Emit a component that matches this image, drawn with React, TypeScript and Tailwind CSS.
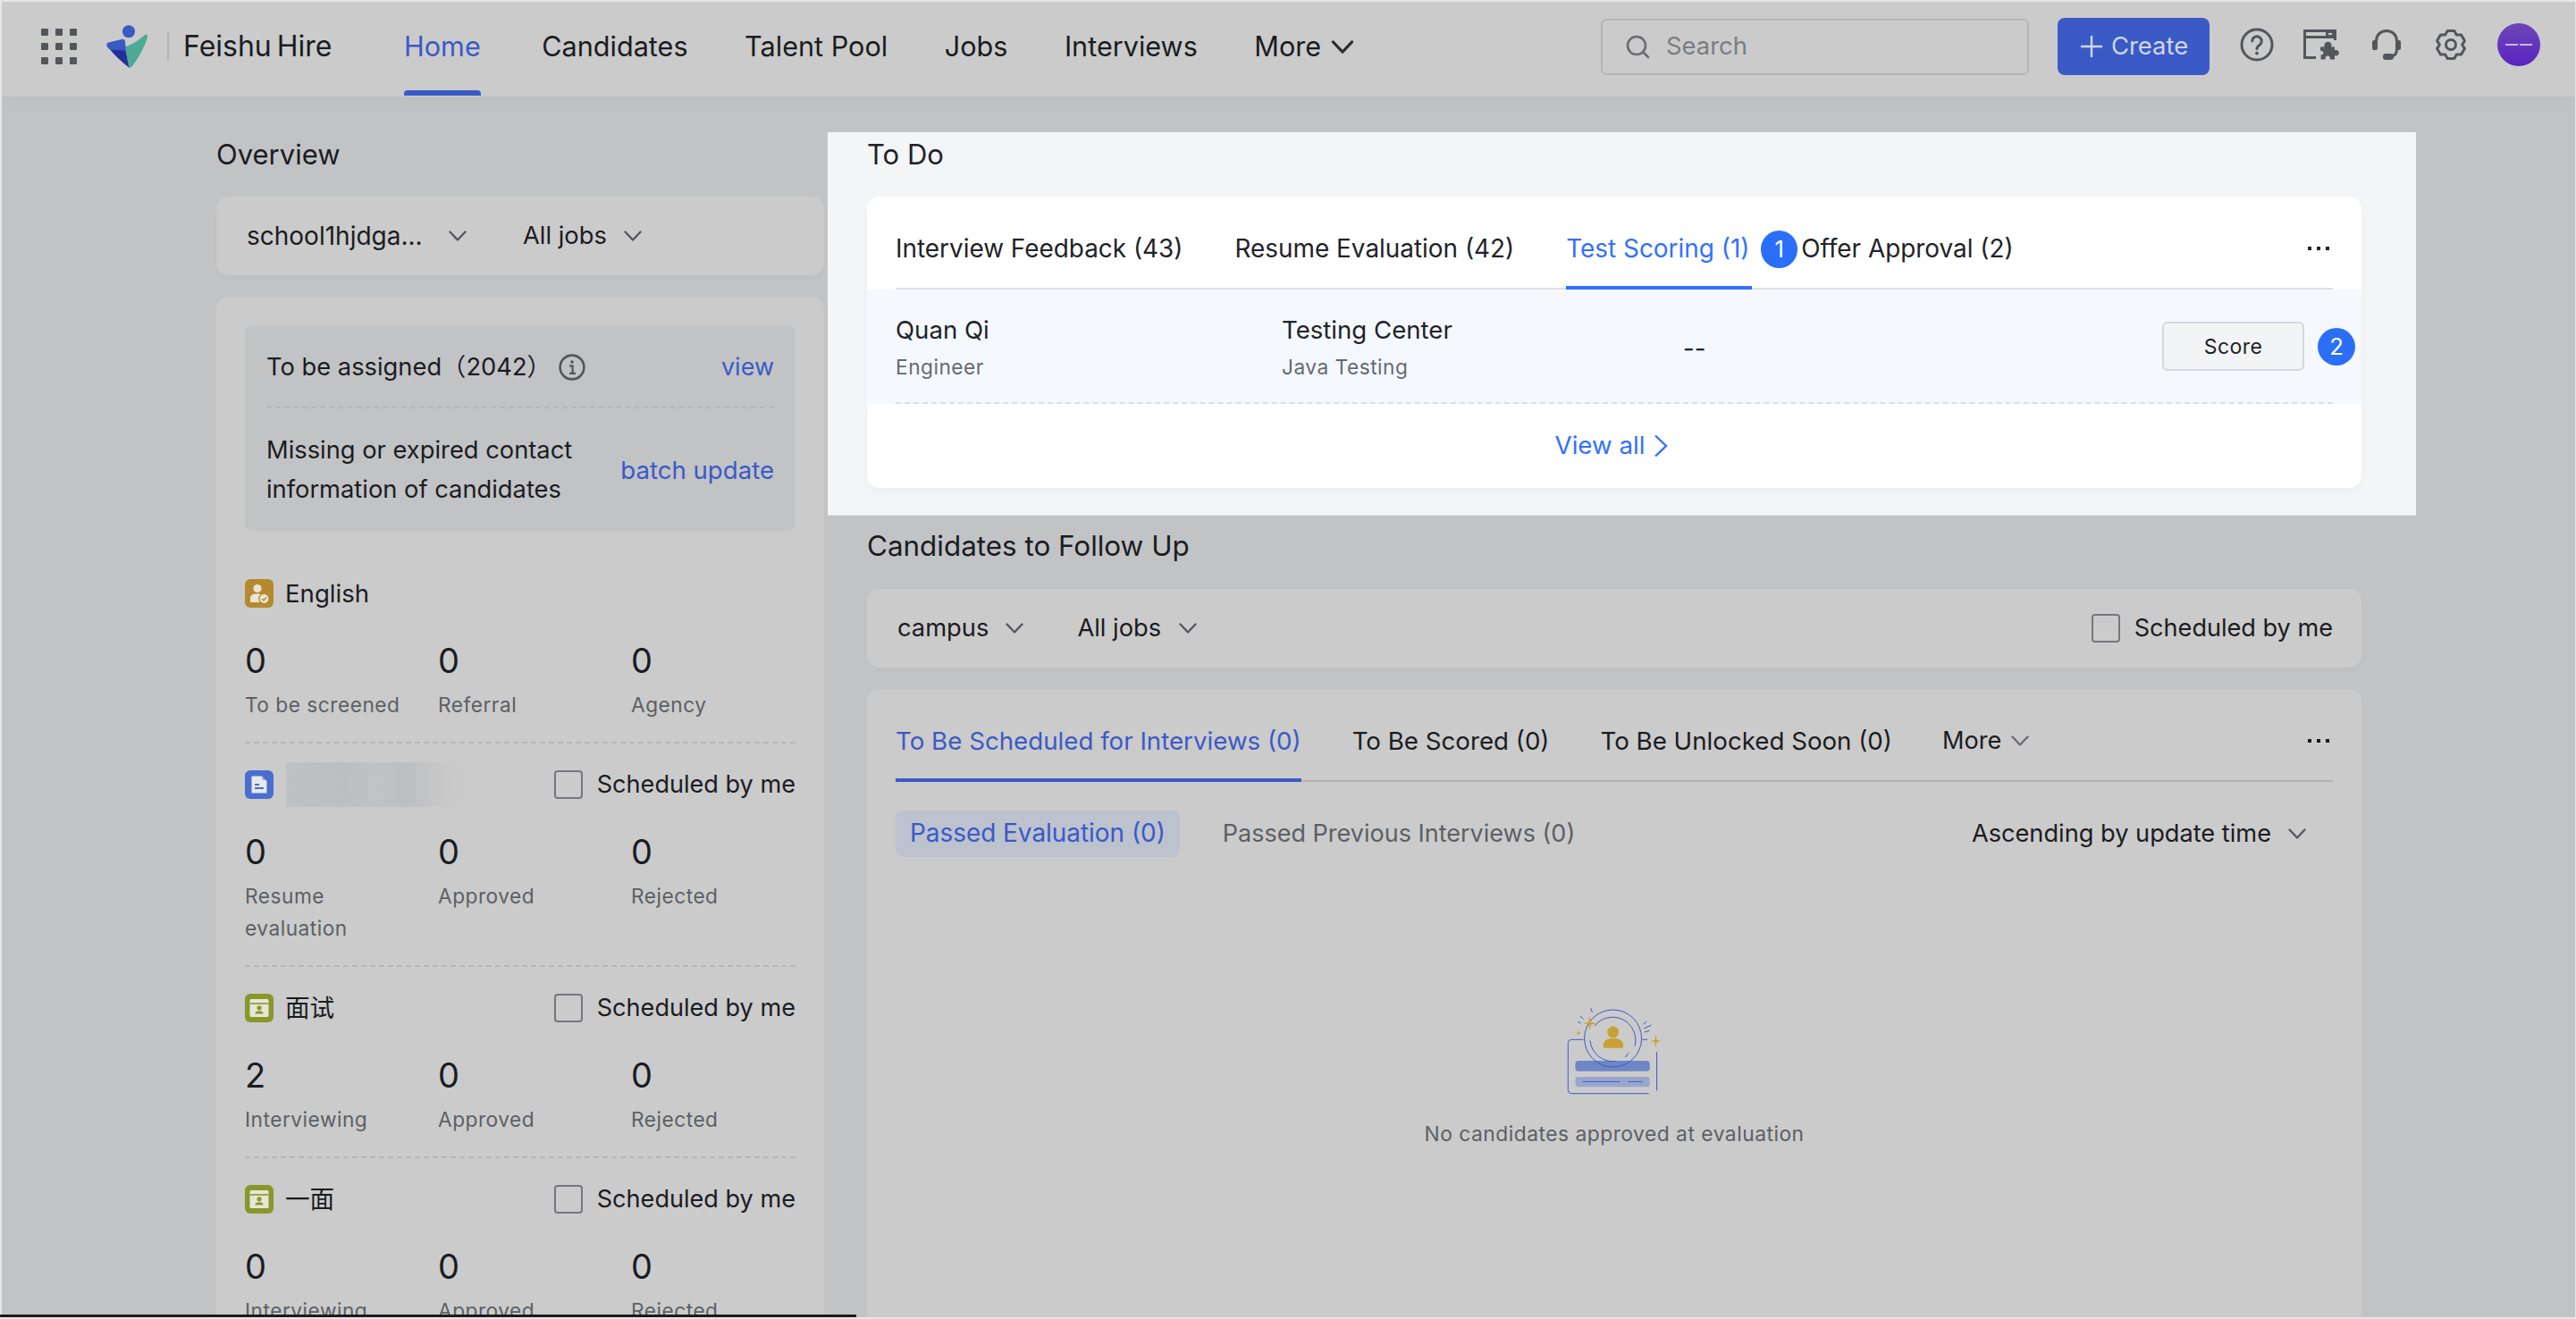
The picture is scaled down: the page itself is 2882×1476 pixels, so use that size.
import React from "react";

const gearPath = (() => {
  const pts: string[] = [];
  const p = (a: number, r: number) => {
    const t = (a * Math.PI) / 180;
    return `${(18 + r * Math.cos(t)).toFixed(2)} ${(18 + r * Math.sin(t)).toFixed(2)}`;
  };
  for (let k = 0; k < 6; k++) {
    const a = -90 + 60 * k;
    pts.push(p(a - 14, 16), p(a + 14, 16), p(a + 30, 12.6));
  }
  return "M" + pts.join("L") + "Z";
})();

function Chevron({ w = 20, color = "#55575d" }: { w?: number; color?: string }) {
  return (
    <svg width={w} height={w / 2 + 2} viewBox="0 0 20 12" fill="none" className="shrink-0">
      <path d="M1.5 1.5L10 10.5L18.5 1.5" stroke={color} strokeWidth="2.4" strokeLinejoin="round" strokeLinecap="round" />
    </svg>
  );
}

function Dots({ color = "#1f2329" }: { color?: string }) {
  return (
    <svg width="24" height="6" viewBox="0 0 24 6" className="shrink-0">
      <rect x="0" y="1" width="4" height="4" fill={color} />
      <rect x="10" y="1" width="4" height="4" fill={color} />
      <rect x="20" y="1" width="4" height="4" fill={color} />
    </svg>
  );
}

function Logo() {
  return (
    <svg width="54" height="54" viewBox="0 0 54 54" className="shrink-0">
      <path d="M25 27.5C31 25.5 42 19 47 14C49 12.5 50.8 14 50 16.5C47.5 27 36 47 31.2 50.8C30 51.8 29 50.5 28.8 49.5L25 27.5Z" fill="#4dab95" />
      <path d="M7.5 29.5L25.5 31L29.3 50.5C23 46 12 36 7.5 29.5Z" fill="#22309a" />
      <path d="M5.5 22.8L21 18.9C23.2 18.4 24.6 19.6 25 21.2L25.8 31.6L7.8 30.4C4.6 28 3 24.3 5.5 22.8Z" fill="#3a5ac6" />
      <circle cx="29" cy="10.3" r="7" fill="#3a5ac6" />
    </svg>
  );
}

function HelpIcon() {
  return (
    <svg width="38" height="38" viewBox="0 0 38 38" fill="none" className="shrink-0">
      <circle cx="19" cy="19" r="17" stroke="#54565c" strokeWidth="3" />
      <path d="M13.8 15a5.2 5.2 0 1 1 8 4.4c-1.9 1.2-2.8 2.2-2.8 4.4" stroke="#54565c" strokeWidth="3" strokeLinecap="round" />
      <circle cx="19" cy="28.6" r="1.9" fill="#54565c" />
    </svg>
  );
}

function PluginIcon() {
  return (
    <svg width="40" height="34" viewBox="0 0 40 34" fill="none" className="shrink-0">
      <path d="M14 31.5H1.5V1.5H35.5V12" stroke="#54565c" strokeWidth="3" />
      <path d="M1.5 8.5H35.5" stroke="#54565c" strokeWidth="3" />
      <rect x="25" y="1" width="11" height="8" fill="#54565c" />
      <rect x="28" y="4" width="4" height="2" fill="#cbcbcb" />
      <path d="M19 19.5H23.6C23 16.6 24.5 13.8 27.6 13.8C30.7 13.8 32 16.6 31.4 19.5H35V23.2C38 22.6 39.8 24 39.8 26.2C39.8 28.4 38 29.8 35 29.2V33.5H29.8C30.1 31 29 29.6 27.2 29.6C25.4 29.6 24.3 31 24.6 33.5H19.6V28.6C21.5 28.4 22.4 27.4 22.4 26C22.4 24.6 21.2 23.6 19 23.7V19.5Z" fill="#54565c" />
    </svg>
  );
}

function HeadsetIcon() {
  return (
    <svg width="32" height="34" viewBox="0 0 32 34" fill="none" className="shrink-0">
      <path d="M4.5 13C4.5 6 9.5 1.5 16 1.5C22.5 1.5 27.5 6 27.5 13" stroke="#54565c" strokeWidth="3" />
      <path d="M27.5 22C27.5 27 25 30 20 30" stroke="#54565c" strokeWidth="3" />
      <rect x="0" y="12" width="6" height="11" rx="2" fill="#54565c" />
      <rect x="26" y="12" width="6" height="11" rx="2" fill="#54565c" />
      <rect x="12" y="27" width="12" height="7" rx="3.2" fill="#54565c" />
    </svg>
  );
}

function GearIcon() {
  return (
    <svg width="36" height="36" viewBox="0 0 36 36" fill="none" className="shrink-0">
      <path d={gearPath} stroke="#54565c" strokeWidth="3" strokeLinejoin="round" />
      <circle cx="18" cy="18" r="5.5" stroke="#54565c" strokeWidth="3" />
    </svg>
  );
}

function SearchIcon() {
  return (
    <svg width="27" height="27" viewBox="0 0 27 27" fill="none" className="shrink-0">
      <circle cx="12" cy="12" r="10" stroke="#6a6c70" strokeWidth="2.6" />
      <path d="M19.5 19.5L25 25" stroke="#6a6c70" strokeWidth="2.6" strokeLinecap="round" />
    </svg>
  );
}

function InfoIcon() {
  return (
    <svg width="30" height="30" viewBox="0 0 30 30" fill="none" className="shrink-0">
      <circle cx="15" cy="15" r="13.4" stroke="#54565c" strokeWidth="2.6" />
      <circle cx="15" cy="9" r="1.8" fill="#54565c" />
      <path d="M12 13.4H15.6V21.4M12 21.8H19" stroke="#54565c" strokeWidth="2.2" />
    </svg>
  );
}

function PersonCheckIcon() {
  return (
    <svg width="32" height="32" viewBox="0 0 32 32" className="block">
      <rect width="32" height="32" rx="6" fill="#b58a2e" />
      <circle cx="14" cy="10.5" r="4.6" fill="#e9e5d6" />
      <path d="M6 26V21C6 17.8 9 16.5 14 16.5C16 16.5 17.5 16.8 18.5 17.2V26Z" fill="#e9e5d6" />
      <circle cx="21.5" cy="22" r="5.6" fill="#e9e5d6" stroke="#b58a2e" strokeWidth="1.4" />
      <path d="M19 22L21 24L24 20.4" stroke="#b58a2e" strokeWidth="1.4" fill="none" />
    </svg>
  );
}

function DocIcon() {
  return (
    <svg width="32" height="32" viewBox="0 0 32 32" className="block">
      <rect width="32" height="32" rx="6" fill="#4a6dd0" />
      <path d="M7.5 6.5H19L24.5 12V25.5H7.5Z" fill="#e6e8ee" />
      <path d="M19.5 5.5L25 11H19.5Z" fill="#4a6dd0" opacity="0.5" />
      <path d="M11 16H16M11 20H21" stroke="#4a6dd0" strokeWidth="1.8" />
    </svg>
  );
}

function CalIcon() {
  return (
    <svg width="32" height="32" viewBox="0 0 32 32" className="block">
      <rect width="32" height="32" rx="6" fill="#87982b" />
      <rect x="5.5" y="6" width="21" height="20" rx="1.5" fill="#e6e6d8" />
      <path d="M5.5 11H26.5" stroke="#87982b" strokeWidth="1.6" />
      <circle cx="16" cy="15.8" r="2.6" fill="#87982b" />
      <path d="M11.4 22.6C11.4 20 13 19.2 16 19.2C19 19.2 20.6 20 20.6 22.6Z" fill="#87982b" />
    </svg>
  );
}

function Sparkle({ x, y, rx, ry }: { x: number; y: number; rx: number; ry: number }) {
  const kx = rx * 0.18;
  const ky = ry * 0.18;
  return (
    <path
      d={`M${x} ${y - ry}L${x + kx} ${y - ky}L${x + rx} ${y}L${x + kx} ${y + ky}L${x} ${y + ry}L${x - kx} ${y + ky}L${x - rx} ${y}L${x - kx} ${y - ky}Z`}
      fill="#c8a033"
    />
  );
}

function EmptyArt() {
  const b = "#3a5ac6";
  return (
    <svg width="112" height="104" viewBox="0 0 112 104" fill="none" className="shrink-0">
      <rect x="12.5" y="61" width="83.2" height="11.7" rx="3.5" fill="#6d87c6" />
      <rect x="12.5" y="79" width="83.2" height="11.3" rx="3.5" fill="#98a6cd" />
      <path d="M20.7 84.4H62.5M71.4 84.4H87.5" stroke={b} strokeWidth="1" />
      <path d="M21.4 37.3H8.3Q4.3 37.3 4.3 41.3V93.7Q4.3 97.7 8.3 97.7H94.6M87.5 37.3H93M103.6 51V94.3" stroke={b} strokeWidth="1" />
      <circle cx="54.6" cy="36" r="32" stroke={b} strokeWidth="1" />
      <path d="M34 22A25.7 25.7 0 0 1 79 44.5M72 52.5L68.5 57M57.5 61.6A25.7 25.7 0 0 1 29 38.5" stroke={b} strokeWidth="1" />
      <circle cx="54.6" cy="29" r="6.4" fill="#c8a033" />
      <path d="M43.9 46.7V43.5C43.9 38.5 48 36 54.9 36C61.8 36 66 38.5 66 43.5V46.7Z" fill="#c8a033" />
      <Sparkle x={28.6} y={19.3} rx={7} ry={8.5} />
      <Sparkle x={16} y={30} rx={3.4} ry={4} />
      <Sparkle x={102.5} y={39} rx={5.6} ry={7.4} />
      <path d="M17.9 11L21.4 14.3M15.4 17.3L18.6 19M29.6 2.3L31.4 6.7M88.6 20L92 17.3M89.3 25L97.5 21M90 29L95.4 27.3" stroke={b} strokeWidth="1" />
    </svg>
  );
}

function Checkbox() {
  return <span className="w-[32px] h-[32px] shrink-0 rounded-[4px] border-[2px] border-[#75777d] block" />;
}

function ScheduledByMe() {
  return (
    <div className="flex items-center gap-[16px] ml-auto">
      <Checkbox />
      <span className="text-[27.1px] leading-[36px] text-[#1b1c1f] whitespace-nowrap">Scheduled by me</span>
    </div>
  );
}

function Stat({ value, label }: { value: string; label: string }) {
  return (
    <div className="pr-[24px]">
      <div className="text-[38px] leading-[50px] text-[#1b1c1f]">{value}</div>
      <div className="mt-[7px] text-[22.7px] leading-[36px] text-[#5d5f64] tracking-[0.5px]">{label}</div>
    </div>
  );
}

function Section({
  icon,
  title,
  scheduled = true,
  stats,
  divider = true,
}: {
  icon: React.ReactNode;
  title?: string;
  scheduled?: boolean;
  stats: [string, string][];
  divider?: boolean;
}) {
  return (
    <div className={divider ? "pb-[23px] mb-[30px] border-b-[2px] border-dashed border-[#b5b6b8]" : ""}>
      <div className="flex items-center h-[32px]">
        <span className="shrink-0 w-[32px] h-[32px]">{icon}</span>
        {title ? (
          <span className="ml-[13px] text-[27.6px] leading-[36px] text-[#1b1c1f]">{title}</span>
        ) : (
          <span className="ml-[14px] w-[203px] h-[50px] bg-[linear-gradient(90deg,#c0c1c4_0%,#bdbec1_30%,#c1c2c4_50%,#bdbec0_66%,#c7c7c8_84%,#cbcbcb_100%)] shrink-0" />
        )}
        {scheduled && <ScheduledByMe />}
      </div>
      <div className="grid grid-cols-[216px_216px_184px] mt-[34px]">
        {stats.map(([v, l]) => (
          <Stat key={l} value={v} label={l} />
        ))}
      </div>
    </div>
  );
}

function Tab({
  children,
  active,
  activeClass = "text-[#3370ff] border-[#3370ff]",
  textClass = "text-[#1f2329] border-transparent",
  widthClass = "",
  sizeClass = "text-[27.9px]",
}: {
  children: React.ReactNode;
  active?: boolean;
  activeClass?: string;
  textClass?: string;
  widthClass?: string;
  sizeClass?: string;
}) {
  return (
    <div
      className={`-mb-[2px] pt-[38px] h-[104px] border-b-[4px] leading-[40px] whitespace-nowrap ${sizeClass} ${widthClass} ${
        active ? activeClass : textClass
      }`}
    >
      {children}
    </div>
  );
}

const NAV = ["Candidates", "Talent Pool", "Jobs", "Interviews"];

export default function App() {
  return (
    <div className="relative w-[2882px] h-[1476px] overflow-hidden bg-[#c2c3c5] font-['Inter','Noto_Sans_CJK_SC',sans-serif]">
      {/* Top navigation */}
      <header className="relative z-10 h-[108px] bg-[#cbcbcb] flex items-center pl-[46px] pr-[40px] shadow-[0_4px_20px_rgba(0,0,0,0.035)]">
        <div className="grid grid-cols-3 gap-[8px] -mt-[4px] shrink-0">
          {Array.from({ length: 9 }).map((_, i) => (
            <span key={i} className="w-[8px] h-[8px] rounded-[1px] bg-[#54565c]" />
          ))}
        </div>
        <span className="ml-[29px] -mt-[4px]">
          <Logo />
        </span>
        <span className="ml-[18px] -mt-[4px] w-[2px] h-[32px] bg-[#b3b3b3]" />
        <span className="ml-[16px] w-[167px] -mt-[4px] text-[32px] text-[#1b1c1f] whitespace-nowrap [word-spacing:-3px]">Feishu Hire</span>
        <nav className="ml-[80px] flex h-full gap-[63.5px] text-[30.6px] text-[#1b1c1f]">
          <div className="relative flex items-center pb-[4px] mr-[5px] text-[#3a5ac6]">
            Home
            <span className="absolute left-0 right-0 bottom-[1px] h-[6px] rounded-t-[4px] bg-[#3a5ac6]" />
          </div>
          {NAV.map((n) => (
            <div key={n} className="flex items-center pb-[4px] whitespace-nowrap">
              {n}
            </div>
          ))}
          <div className="flex items-center gap-[11px] pb-[4px]">
            More <Chevron w={26} color="#2b2c30" />
          </div>
        </nav>
        <div className="ml-auto flex items-center">
          <div className="w-[479px] h-[63px] -mt-[4px] rounded-[6px] border-[2px] border-[#b5b5b5] flex items-center pl-[26px] gap-[18px]">
            <SearchIcon />
            <span className="text-[27.4px] text-[#7b7d81]">Search</span>
          </div>
          <div className="ml-[32px] -mt-[4px] w-[170px] h-[64px] rounded-[8px] bg-[#3a5ac6] flex items-center pl-[26px] gap-[10px] text-[27.4px] text-[#cfd6ee]">
            <svg width="24" height="24" viewBox="0 0 24 24" className="shrink-0">
              <path d="M12 0V24M0 12H24" stroke="#cfd6ee" strokeWidth="2.4" />
            </svg>
            Create
          </div>
          <div className="ml-[34px] -mt-[8px] flex items-center">
            <HelpIcon />
            <span className="ml-[33px]"><PluginIcon /></span>
            <span className="ml-[37px]"><HeadsetIcon /></span>
            <span className="ml-[38px]"><GearIcon /></span>
          </div>
          <div className="ml-[34px] -mt-[8px] w-[48px] h-[48px] rounded-full bg-[linear-gradient(180deg,#6f46b8,#5a24c0)] flex items-center justify-center gap-[2px]">
            <span className="w-[14px] h-[2px] bg-[#c8b8e8]" />
            <span className="w-[14px] h-[2px] bg-[#c8b8e8]" />
          </div>
        </div>
      </header>

      {/* Body */}
      <main className="flex pl-[242px] pt-[40px] gap-[48px]">
        {/* Overview column */}
        <section className="w-[680px] shrink-0">
          <h2 className="h-[50px] flex items-center text-[31px] font-normal text-[#1b1c1f]">Overview</h2>
          <div className="mt-[22px] h-[88px] rounded-[14px] bg-[#cbcbcb] shadow-[0_4px_8px_rgba(0,0,0,0.02)] flex items-center pl-[34px] text-[27.3px] text-[#1b1c1f]">
            <span className="whitespace-nowrap text-[28px] w-[196px]">school1hjdga...</span>
            <span className="ml-[30px]"><Chevron /></span>
            <span className="ml-[63px] whitespace-nowrap">All jobs</span>
            <span className="ml-[19px]"><Chevron /></span>
          </div>
          <div className="mt-[24px] rounded-[14px] bg-[#cbcbcb] px-[32px] pt-[32px] h-[1200px]">
            <div className="rounded-[8px] bg-[#c2c3c5] px-[24px] h-[230px] text-[27.3px] text-[#1b1c1f]">
              <div className="h-[93px] pt-[3px] border-b-[2px] border-dashed border-[#b5b6b8] flex items-center">
                <span className="whitespace-nowrap">To be assigned（2042）</span>
                <span className="ml-[8px]"><InfoIcon /></span>
                <span className="ml-auto text-[#3a5ac6] text-[27px]">view</span>
              </div>
              <div className="flex items-center h-[137px]">
                <span className="leading-[44px]">
                  Missing or expired contact
                  <br />
                  information of candidates
                </span>
                <span className="ml-auto mt-[3px] text-[#3a5ac6] whitespace-nowrap text-[27.6px]">batch update</span>
              </div>
            </div>
            <div className="mt-[54px]">
              <Section
                icon={<PersonCheckIcon />}
                title="English"
                scheduled={false}
                stats={[
                  ["0", "To be screened"],
                  ["0", "Referral"],
                  ["0", "Agency"],
                ]}
              />
              <Section
                icon={<DocIcon />}
                stats={[
                  ["0", "Resume evaluation"],
                  ["0", "Approved"],
                  ["0", "Rejected"],
                ]}
              />
              <Section
                icon={<CalIcon />}
                title="面试"
                stats={[
                  ["2", "Interviewing"],
                  ["0", "Approved"],
                  ["0", "Rejected"],
                ]}
              />
              <Section
                icon={<CalIcon />}
                title="一面"
                divider={false}
                stats={[
                  ["0", "Interviewing"],
                  ["0", "Approved"],
                  ["0", "Rejected"],
                ]}
              />
            </div>
          </div>
        </section>

        {/* Right column */}
        <section className="w-[1672px] shrink-0">
          {/* Highlighted To Do block */}
          <div className="-ml-[44px] w-[1777px] pl-[44px] pr-[61px] pb-[30px] bg-[#f4f5f7] border-b-[1px] border-[#e3e4e6] relative z-20">
            <h2 className="h-[50px] flex items-center text-[31px] font-normal text-[#1f2329]">To Do</h2>
            <div className="mt-[22px] rounded-[14px] bg-white overflow-hidden shadow-[0_4px_10px_rgba(0,0,0,0.03)]">
              <div className="px-[32px]">
                <div className="h-[104px] border-b-[2px] border-[#dcdee1] flex">
                  <Tab>Interview Feedback (43)</Tab>
                  <span className="ml-[58px]"><Tab>Resume Evaluation (42)</Tab></span>
                  <span className="ml-[58px]">
                    <Tab active widthClass="w-[208px]">Test Scoring (1)</Tab>
                  </span>
                  <span className="ml-[10px] mt-[38px] w-[41px] h-[42px] rounded-full bg-[#2b6ff8] text-white text-[25.7px] leading-[42px] text-center shrink-0">1</span>
                  <span className="ml-[4px]"><Tab>Offer Approval (2)</Tab></span>
                  <span className="ml-auto mt-[55px] mr-[4px]"><Dots /></span>
                </div>
              </div>
              <div className="relative bg-[#f5f8ff] px-[32px]">
                <div className="h-[128px] border-b-[2px] border-dashed border-[#dcdee1] flex">
                  <div className="w-[432px] pt-[25px]">
                    <div className="text-[27.6px] leading-[40px] text-[#1f2329]">Quan Qi</div>
                    <div className="mt-[2px] text-[22.7px] leading-[40px] text-[#646a73] tracking-[0.5px]">Engineer</div>
                  </div>
                  <div className="w-[449px] pt-[25px]">
                    <div className="text-[27.6px] leading-[40px] text-[#1f2329]">Testing Center</div>
                    <div className="mt-[2px] text-[22.7px] leading-[40px] text-[#646a73] tracking-[0.5px]">Java Testing</div>
                  </div>
                  <div className="pt-[46px] text-[27.6px] leading-[40px] text-[#1f2329]">--</div>
                  <button className="ml-auto mr-[32px] mt-[36px] w-[159px] h-[55px] pt-[1px] rounded-[6px] border-[2px] border-[#d5d7db] bg-[#f3f4f5] text-[23px] text-[#1f2329] tracking-[0.4px]">
                    Score
                  </button>
                </div>
                <span className="absolute right-[7px] top-[43px] w-[42px] h-[42px] rounded-full bg-[#2b6ff8] text-white text-[25.7px] leading-[42px] text-center">2</span>
              </div>
              <div className="h-[94px] flex items-center justify-center gap-[10px] text-[27.7px] text-[#3370ff] pr-[6px]">
                View all
                <svg width="16" height="26" viewBox="0 0 16 26" fill="none" className="shrink-0">
                  <path d="M2 1.5L14 13L2 24.5" stroke="#3370ff" strokeWidth="2.4" />
                </svg>
              </div>
            </div>
          </div>

          <div>
            <h2 className="mt-[10px] h-[50px] flex items-center text-[31.4px] font-normal text-[#1b1c1f]">Candidates to Follow Up</h2>
            <div className="mt-[22px] h-[88px] rounded-[14px] bg-[#cbcbcb] shadow-[0_4px_8px_rgba(0,0,0,0.02)] flex items-center pl-[34px] pr-[32px] text-[27.3px] text-[#1b1c1f]">
              <span>campus</span>
              <span className="ml-[19px]"><Chevron /></span>
              <span className="ml-[60px] whitespace-nowrap">All jobs</span>
              <span className="ml-[20px]"><Chevron /></span>
              <ScheduledByMe />
            </div>
            <div className="mt-[24px] rounded-[14px] bg-[#cbcbcb] px-[32px] h-[800px]">
              <div className="h-[104px] border-b-[2px] border-[#b3b3b3] flex">
                <Tab
                  active
                  sizeClass="text-[27.7px]"
                  activeClass="text-[#3a5ac6] border-[#3a5ac6]"
                  textClass="text-[#1b1c1f] border-transparent"
                >
                  To Be Scheduled for Interviews (0)
                </Tab>
                <span className="ml-[57px]"><Tab sizeClass="text-[27.7px]" textClass="text-[#1b1c1f] border-transparent">To Be Scored (0)</Tab></span>
                <span className="ml-[57px]"><Tab sizeClass="text-[27.7px]" textClass="text-[#1b1c1f] border-transparent">To Be Unlocked Soon (0)</Tab></span>
                <div className="ml-[56px] mt-[38px] h-[40px] flex items-center gap-[11px] text-[27.1px] text-[#1b1c1f]">
                  More <Chevron color="#6b6d72" />
                </div>
                <span className="ml-auto mt-[55px] mr-[4px]"><Dots color="#1b1c1f" /></span>
              </div>
              <div className="mt-[32px] flex items-center h-[52px] text-[27px] pr-[30px]">
                <span className="h-[52px] rounded-[8px] bg-[#bdc2cf] px-[16px] flex items-center text-[#3a5ac6] whitespace-nowrap text-[27.9px]">Passed Evaluation (0)</span>
                <span className="ml-[48px] text-[#5d5f64] whitespace-nowrap">Passed Previous Interviews (0)</span>
                <span className="ml-auto text-[#1b1c1f] whitespace-nowrap text-[27.2px]">Ascending by update time</span>
                <span className="ml-[19px]"><Chevron /></span>
              </div>
              <div className="mt-[167px] flex flex-col items-center">
                <EmptyArt />
                <div className="mt-[21px] text-[22.8px] leading-[36px] text-[#5d5f64] tracking-[0.5px]">No candidates approved at evaluation</div>
              </div>
            </div>
          </div>
        </section>
      </main>

      {/* Window edge left by the capture */}
      <div className="absolute inset-0 z-30 pointer-events-none border-t-[2px] border-l-[2px] border-r-[1px] border-[#e6e6e6]" />
      <div className="absolute left-0 bottom-0 z-30 w-full h-[2px] bg-[#e6e6e6]" />
      <div className="absolute left-0 bottom-[2px] z-30 w-[958px] h-[3px] bg-[#1c1c1c]" />
    </div>
  );
}
